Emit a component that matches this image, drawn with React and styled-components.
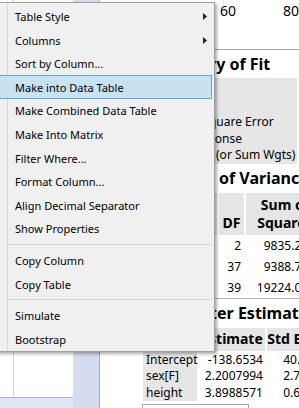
import React from 'react';
import styled, { createGlobalStyle } from 'styled-components';

const GlobalStyle = createGlobalStyle`
  *, *::before, *::after { box-sizing: border-box; }
  html, body { margin: 0; padding: 0; background: #fff; }
  body { font-family: "Noto Sans", "DejaVu Sans", sans-serif; color: #000; }
`;

const Screen = styled.div`
  position: relative;
  width: 299px;
  height: 408px;
  overflow: hidden;
  display: flex;
  background: #fff;
  font-size: 12px;
`;

/* left pane: data grid behind the menu */
const LeftPane = styled.div`
  flex: 0 0 136px;
  display: grid;
  grid-template-columns: 73px 27px 1fr;
  grid-template-rows: 1fr 10px;
`;

const TreeCell = styled.div`
  background: linear-gradient(#d6d6d6, #d6d6d6) 13px 0 / 1px 100% no-repeat;
  border-bottom: 1px solid #aab1d9;
`;

const TreeFooter = styled.div`
  background: #e1e4f2;
`;

const SelectedColumn = styled.div`
  grid-column: 2;
  grid-row: 1 / 3;
  background: #d6dcef;
  border-right: 1px solid #a1a8d5;
`;

const BlankColumn = styled.div`
  grid-column: 3;
  grid-row: 1 / 3;
`;

/* report column */
const Report = styled.div`
  flex: 1;
  min-width: 0;
  display: flex;
  flex-direction: column;
  align-items: flex-start;

  & > * {
    flex-shrink: 0;
  }
`;

const AxisRow = styled.div`
  align-self: stretch;
  height: 50px;
  display: flex;
  gap: 47px;
  padding: 1px 0 0 84px;
  border-bottom: 1px solid #a3a3a3;
  font-size: 14px;
  white-space: nowrap;
`;

const OutlineTitle = styled.div`
  align-self: stretch;
  height: ${(p) => p.$h}px;
  display: flex;
  align-items: center;
  padding-left: 13px;
  font-size: 16px;
  font-weight: 700;
  white-space: nowrap;
  border-top: ${(p) => (p.$rule ? '1px solid #b4b4b4' : '0')};
`;

const SummaryTable = styled.div`
  display: flex;
  white-space: nowrap;
`;

const LabelColumn = styled.div`
  width: 161px;
  padding: 3px 0 0 2px;
  background: #e6e6e6;
`;

const ValueColumn = styled.div`
  width: 80px;
  padding: 3px 4px 0 0;
  text-align: right;
`;

const Line = styled.div`
  height: 16.5px;
  line-height: 16.5px;
`;

const Grid = styled.div`
  display: grid;
  grid-template-columns: ${(p) => p.$cols};
  column-gap: 2px;
  margin-left: ${(p) => p.$indent || 0}px;
  white-space: nowrap;
`;

const HeadCell = styled.div`
  height: ${(p) => p.$h}px;
  display: flex;
  flex-direction: column;
  justify-content: ${(p) => (p.$bottom ? 'flex-end' : 'center')};
  align-items: center;
  margin-bottom: ${(p) => p.$gap || 0}px;
  padding: ${(p) => (p.$bottom ? '3px' : '0')} ${(p) => p.$pr || 0}px ${(p) => (p.$bottom ? '3px' : '0')} 0;
  background: #e5e5e5;
  font-size: 14px;
  font-weight: 700;
  line-height: 18px;
`;

const Cell = styled.div`
  height: ${(p) => p.$h}px;
  line-height: ${(p) => p.$h}px;
  text-align: ${(p) => p.$align || 'right'};
  padding: 0 ${(p) => p.$pr || 0}px 0 ${(p) => p.$pl || 0}px;
  background: ${(p) => (p.$shade ? '#e6e6e6' : 'transparent')};
`;

const NextBox = styled.div`
  width: 107px;
  height: 20px;
  margin: 3px 0 0 6px;
  border: 1px solid #a8a8a8;
  border-bottom: 0;
`;

/* context menu overlay */
const Menu = styled.ul`
  position: absolute;
  left: -4px;
  top: 2px;
  width: 219px;
  margin: 0;
  padding: 1.7px 0 0;
  list-style: none;
  background: #f0f0f0 linear-gradient(#dadada, #dadada) 10px 0 / 1px 100% no-repeat;
  border: 1px solid #a0a0a0;
  box-shadow: 2px 2px 3px rgba(0, 0, 0, 0.32);
  font-family: "Noto Sans", sans-serif;
  font-size: 11px;
  z-index: 2;
`;

const MenuItem = styled.li`
  height: 23.6px;
  margin: 0 2px;
  padding: 0 4px 0 15px;
  display: flex;
  align-items: center;
  justify-content: space-between;
  border: 1px solid ${(p) => (p.$active ? '#5aa9dd' : 'transparent')};
  background: ${(p) => (p.$active ? '#c9e2f2' : 'transparent')};
  white-space: nowrap;
`;

const Separator = styled.li`
  height: 8px;
  margin: 0 2px 0 10px;
  background: linear-gradient(#d4d4d4, #d4d4d4) 0 50% / 100% 1px no-repeat;
`;

const SubArrow = () => (
  <svg width="4" height="7" viewBox="0 0 4 7">
    <polygon points="0,0 4,3.5 0,7" fill="#222" />
  </svg>
);

const menu = [
  { label: 'Table Style', sub: true },
  { label: 'Columns', sub: true },
  { label: 'Sort by Column...' },
  { label: 'Make into Data Table', active: true },
  { label: 'Make Combined Data Table' },
  { label: 'Make Into Matrix' },
  { label: 'Filter Where...' },
  { label: 'Format Column...' },
  { label: 'Align Decimal Separator' },
  { label: 'Show Properties' },
  { sep: true },
  { label: 'Copy Column' },
  { label: 'Copy Table' },
  { sep: true },
  { label: 'Simulate' },
  { label: 'Bootstrap' },
];

const summary = [
  ['RSquare', '0.511646'],
  ['RSquare Adj', '0.485248'],
  ['Root Mean Square Error', '15.92947'],
  ['Mean of Response', '105'],
  ['Observations (or Sum Wgts)', '40'],
];

const anova = [
  ['Model', '2', '9835.253'],
  ['Error', '37', '9388.784'],
  ['C. Total', '39', '19224.037'],
];

const estimates = [
  ['Intercept', '-138.6534', '40.58093'],
  ['sex[F]', '2.2007994', '2.757512'],
  ['height', '3.8988571', '0.637355'],
];

export default function App() {
  return (
    <Screen>
      <GlobalStyle />
      <LeftPane>
        <TreeCell />
        <TreeFooter />
        <SelectedColumn />
        <BlankColumn />
      </LeftPane>

      <Report>
        <AxisRow>
          <span>60</span>
          <span>80</span>
        </AxisRow>

        <OutlineTitle $h={28}>Summary of Fit</OutlineTitle>
        <SummaryTable>
          <LabelColumn>
            {summary.map(([k]) => <Line key={k}>{k}</Line>)}
          </LabelColumn>
          <ValueColumn>
            {summary.map(([k, v]) => <Line key={k}>{v}</Line>)}
          </ValueColumn>
        </SummaryTable>

        <OutlineTitle $h={29}>Analysis of Variance</OutlineTitle>
        <Grid $cols="81px 25px 78px">
          <HeadCell $h={42} $bottom>Source</HeadCell>
          <HeadCell $h={42} $bottom>DF</HeadCell>
          <HeadCell $h={42} $bottom>
            <span>Sum of</span>
            <span>Squares</span>
          </HeadCell>
          {anova.map(([src, df, ss]) => (
            <React.Fragment key={src}>
              <Cell $h={21} $align="left" $pl={4}>{src}</Cell>
              <Cell $h={21} $pr={3}>{df}</Cell>
              <Cell $h={21} $pr={9}>{ss}</Cell>
            </React.Fragment>
          ))}
        </Grid>

        <OutlineTitle $h={30} $rule>Parameter Estimates</OutlineTitle>
        <Grid $cols="54px 66px 70px" $indent={7}>
          <HeadCell $h={23} $gap={1}>Term</HeadCell>
          <HeadCell $h={23} $gap={1}>Estimate</HeadCell>
          <HeadCell $h={23} $gap={1} $pr={8}>Std Error</HeadCell>
          {estimates.map(([term, est, se]) => (
            <React.Fragment key={term}>
              <Cell $h={16.67} $align="left" $pl={3} $shade>{term}</Cell>
              <Cell $h={16.67} $pr={2}>{est}</Cell>
              <Cell $h={16.67} $pr={2.5}>{se}</Cell>
            </React.Fragment>
          ))}
        </Grid>
        <NextBox />
      </Report>

      <Menu>
        {menu.map((m, i) =>
          m.sep ? (
            <Separator key={i} />
          ) : (
            <MenuItem key={m.label} $active={m.active}>
              <span>{m.label}</span>
              {m.sub && <SubArrow />}
            </MenuItem>
          )
        )}
      </Menu>
    </Screen>
  );
}
